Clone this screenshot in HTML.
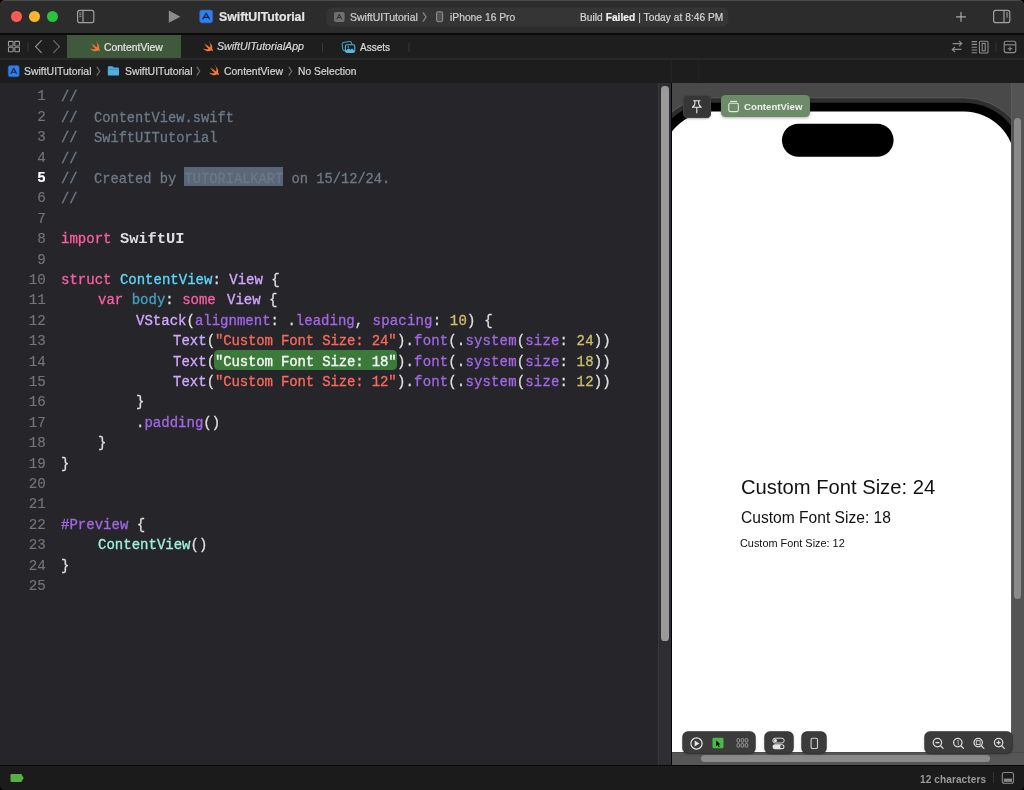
<!DOCTYPE html>
<html><head><meta charset="utf-8">
<style>
*{box-sizing:border-box;margin:0;padding:0}
html,body{width:1024px;height:790px;overflow:hidden;background:#000}
body{position:relative;font-family:"Liberation Sans",sans-serif}
.a{position:absolute}
.t{white-space:pre;will-change:transform}
svg{position:absolute;overflow:visible}
#win{position:absolute;left:0;top:0;width:1024px;height:790px;overflow:hidden;border-radius:5px;background:#1c1c1c}
</style></head><body>
<div id="win">

<div class="a" style="left:0;top:0;width:1024px;height:34px;background:#2c2c2c;border-radius:5px 5px 0 0;box-shadow:inset 0 1px 0 #4a4a4a"></div>
<div class="a" style="left:0;top:33.3px;width:1024px;height:1.6px;background:#0b0b0b"></div>
<div class="a" style="left:11.3px;top:11.0px;width:11.2px;height:11.2px;border-radius:50%;background:#fe5a52"></div>
<div class="a" style="left:28.9px;top:11.0px;width:11.2px;height:11.2px;border-radius:50%;background:#f9b52f"></div>
<div class="a" style="left:46.7px;top:11.0px;width:11.2px;height:11.2px;border-radius:50%;background:#2bc33e"></div>
<svg style="left:0;top:0" width="1024" height="34"><g fill="none" stroke="#a0a0a0" stroke-width="1.2"><rect x="77.6" y="10.4" width="16.2" height="12.2" rx="2.2"/><line x1="83" y1="10.4" x2="83" y2="23"/></g><g stroke="#8a8a8a" stroke-width="1"><line x1="79.3" y1="13" x2="81.5" y2="13"/><line x1="79.3" y1="14.8" x2="81.5" y2="14.8"/><line x1="79.3" y1="16.6" x2="81.5" y2="16.6"/></g><path d="M168.8 10.6 L180.4 16.7 L168.8 22.8 Z" fill="#8c8c8c"/><rect x="199.6" y="10" width="13.1" height="12.9" rx="2.4" fill="#2f7ef2" stroke="#2a5fb0" stroke-width="0.6"/><g stroke="#1b2740" stroke-width="1.25" fill="none" stroke-linecap="round"><path d="M206.2 13.2 L202.9 18.9 M206.2 13.2 L209.5 18.9 M204.4 17.4 H208"/></g><rect x="326.2" y="7.6" width="402.2" height="18.8" rx="6" fill="#353535"/><rect x="334" y="11.9" width="10.6" height="10.2" rx="2" fill="#707070"/><g stroke="#2e2e2e" stroke-width="1" fill="none" stroke-linecap="round"><path d="M339.3 14.4 L336.9 18.9 M339.3 14.4 L341.7 18.9 M338 17.6 H340.6"/></g><path d="M423.3 12.9 L426 17 L423.3 21.1" fill="none" stroke="#888" stroke-width="1.3" stroke-linecap="round"/><rect x="436.6" y="11.8" width="6" height="9.9" rx="1.6" fill="#505050" stroke="#8e8e8e" stroke-width="1.1"/><path d="M961 12 V21.8 M956.1 16.9 H965.9" stroke="#a8a8a8" stroke-width="1.2"/><g fill="none" stroke="#a0a0a0" stroke-width="1.2"><rect x="993.6" y="10.4" width="16.2" height="12.2" rx="2.2"/><line x1="1004" y1="10.4" x2="1004" y2="22.6"/></g><rect x="1006.1" y="12" width="2" height="5.6" fill="#6a6a6a"/></svg>
<div class="a t" style="left:219.40px;top:11.47px;font-size:12.30px;line-height:13.74px;color:#e4e4e4;font-weight:bold;font-style:normal;letter-spacing:0px;font-family:'Liberation Sans';-webkit-text-stroke:0.22px;">SwiftUITutorial</div>
<div class="a t" style="left:350.40px;top:11.80px;font-size:10.50px;line-height:11.73px;color:#cccccc;font-weight:normal;font-style:normal;letter-spacing:0px;font-family:'Liberation Sans';-webkit-text-stroke:0.22px;">SwiftUITutorial</div>
<div class="a t" style="left:450.20px;top:11.98px;font-size:10.30px;line-height:11.51px;color:#cccccc;font-weight:normal;font-style:normal;letter-spacing:0px;font-family:'Liberation Sans';-webkit-text-stroke:0.22px;">iPhone 16 Pro</div>
<div class="a t" style="left:579.50px;top:12.11px;font-size:10.15px;line-height:11.34px;color:#d4d4d4;font-weight:normal;font-style:normal;letter-spacing:0.06px;font-family:'Liberation Sans';-webkit-text-stroke:0.22px;">Build <b style="color:#f0f0f0">Failed</b> | Today at 8:46 PM</div>
<div class="a" style="left:0;top:35px;width:1024px;height:24px;background:#1e1e1e"></div>
<div class="a" style="left:67.4px;top:35px;width:113.7px;height:23.3px;background:#40583b"></div>
<div class="a" style="left:0;top:58.2px;width:1024px;height:1.8px;background:#282828"></div>
<svg style="left:88.7px;top:42.0px" width="10.8" height="9.6" viewBox="0.9 3.4 19.4 16.7" preserveAspectRatio="none"><path d="M13.543 3.41c4.114 2.47 6.545 7.162 5.549 11.131-.024.093-.05.181-.076.272l.002.001c2.062 2.538 1.5 5.258 1.236 4.745-1.072-2.086-3.066-1.568-4.088-1.043a6.803 6.803 0 0 1-.281.158l-.02.012-.002.002c-2.115 1.123-4.957 1.205-7.812-.022a12.568 12.568 0 0 1-5.64-4.838c.649.48 1.35.902 2.097 1.252 3.019 1.414 6.051 1.311 8.197-.002C9.651 12.73 7.347 9.965 5.626 7.654a26.14 26.14 0 0 1-1.105-1.748c2.06 1.883 5.32 4.258 6.48 4.912C8.54 8.225 6.3 4.965 7.35 6.216c3.667 3.9 6.84 6.162 8.026 6.88.13-.367.24-.745.334-1.138.871-3.546-.197-7.587-2.167-10.548z" fill="#f5782f"/></svg>
<div class="a t" style="left:104.00px;top:41.59px;font-size:10.40px;line-height:11.62px;color:#e2e2e2;font-weight:normal;font-style:normal;letter-spacing:0px;font-family:'Liberation Sans';-webkit-text-stroke:0.22px;">ContentView</div>
<svg style="left:201.9px;top:42.0px" width="10.8" height="9.6" viewBox="0.9 3.4 19.4 16.7" preserveAspectRatio="none"><path d="M13.543 3.41c4.114 2.47 6.545 7.162 5.549 11.131-.024.093-.05.181-.076.272l.002.001c2.062 2.538 1.5 5.258 1.236 4.745-1.072-2.086-3.066-1.568-4.088-1.043a6.803 6.803 0 0 1-.281.158l-.02.012-.002.002c-2.115 1.123-4.957 1.205-7.812-.022a12.568 12.568 0 0 1-5.64-4.838c.649.48 1.35.902 2.097 1.252 3.019 1.414 6.051 1.311 8.197-.002C9.651 12.73 7.347 9.965 5.626 7.654a26.14 26.14 0 0 1-1.105-1.748c2.06 1.883 5.32 4.258 6.48 4.912C8.54 8.225 6.3 4.965 7.35 6.216c3.667 3.9 6.84 6.162 8.026 6.88.13-.367.24-.745.334-1.138.871-3.546-.197-7.587-2.167-10.548z" fill="#f5782f"/></svg>
<div class="a t" style="left:217.00px;top:41.41px;font-size:10.60px;line-height:11.84px;color:#d6d6d6;font-weight:normal;font-style:italic;letter-spacing:0px;font-family:'Liberation Sans';-webkit-text-stroke:0.22px;">SwiftUITutorialApp</div>
<svg style="left:0;top:34px" width="1024" height="25"><g fill="none" stroke="#9a9a9a" stroke-width="1.1"><rect x="8.5" y="7.4" width="4.6" height="4.6" rx="0.6"/><rect x="14.8" y="7.4" width="4.6" height="4.6" rx="0.6"/><rect x="8.5" y="13.2" width="4.6" height="4.6" rx="0.6"/><rect x="14.8" y="13.2" width="4.6" height="4.6" rx="0.6"/></g><line x1="28" y1="8" x2="28" y2="18" stroke="#383838" stroke-width="1"/><path d="M41.6 6.3 L35.6 12.6 L41.6 18.9" fill="none" stroke="#909090" stroke-width="1.2"/><path d="M53.4 6.3 L59.4 12.6 L53.4 18.9" fill="none" stroke="#6a6a6a" stroke-width="1.2"/><line x1="322.5" y1="9" x2="322.5" y2="18" stroke="#383838" stroke-width="1"/><line x1="409" y1="9" x2="409" y2="18" stroke="#383838" stroke-width="1"/><g transform="rotate(-9 347 12)"><rect x="342.4" y="8" width="9.6" height="8.4" rx="1.8" fill="none" stroke="#4a9ac4" stroke-width="1.1"/></g><rect x="345.4" y="10.8" width="9.4" height="7.6" rx="1.6" fill="#1e1e1e" stroke="#5ab4e0" stroke-width="1.1"/><path d="M345.9 18 L345.9 16.4 L348.6 14.2 L350.6 15.8 L352 14.6 L354.3 16.6 L354.3 18 Z" fill="#5ab4e0"/><circle cx="348.3" cy="13.1" r="0.8" fill="#5ab4e0"/><g fill="none" stroke="#8e8e8e" stroke-width="1.1"><path d="M952.6 9.6 H961.8 M959 7 L961.8 9.6 L959 12.2"/><path d="M961.4 15.4 H952.2 M955 12.8 L952.2 15.4 L955 18"/><path d="M971.6 7.6 H977 M971.6 10.4 H977 M971.6 13.2 H977 M971.6 16 H977 M971.6 18.8 H977"/><rect x="979.4" y="7.2" width="8.6" height="11.8" rx="1"/><rect x="982.2" y="9.4" width="3" height="7.4"/><rect x="1004.2" y="7.2" width="11.6" height="11.4" rx="2"/><line x1="1004.2" y1="10.8" x2="1015.8" y2="10.8"/><path d="M1010 12.4 V17 M1007.7 14.7 H1012.3"/></g><line x1="996" y1="8" x2="996" y2="18" stroke="#333" stroke-width="1"/></svg>
<div class="a t" style="left:359.60px;top:41.95px;font-size:10.00px;line-height:11.17px;color:#dadada;font-weight:normal;font-style:normal;letter-spacing:0px;font-family:'Liberation Sans';-webkit-text-stroke:0.22px;">Assets</div>
<div class="a" style="left:0;top:60px;width:1024px;height:23px;background:#1d1d1d"></div>
<svg style="left:0;top:59px" width="1024" height="24"><rect x="8.2" y="6.6" width="11" height="11.2" rx="2" fill="#2f7ef2" stroke="#2a5fb0" stroke-width="0.5"/><g stroke="#1b2740" stroke-width="1.1" fill="none" stroke-linecap="round"><path d="M13.7 9.2 L11 14.4 M13.7 9.2 L16.4 14.4 M12.2 13.2 H15.2"/></g><g fill="none" stroke="#6a6a6a" stroke-width="1.25" stroke-linecap="round"><path d="M97 8.2 L99.7 12.2 L97 16.2"/><path d="M197 8.2 L199.7 12.2 L197 16.2"/><path d="M289 8.2 L291.7 12.2 L289 16.2"/></g><path d="M107.8 8.4 Q107.8 7.2 109 7.2 H112.4 L113.6 8.6 H117.8 Q119 8.6 119 9.8 V15.4 Q119 16.6 117.8 16.6 H109 Q107.8 16.6 107.8 15.4 Z" fill="#52ade3"/><rect x="107.8" y="9.8" width="11.2" height="1" fill="#3a8fc4"/></svg>
<svg style="left:208.4px;top:66.0px" width="10.8" height="9.6" viewBox="0.9 3.4 19.4 16.7" preserveAspectRatio="none"><path d="M13.543 3.41c4.114 2.47 6.545 7.162 5.549 11.131-.024.093-.05.181-.076.272l.002.001c2.062 2.538 1.5 5.258 1.236 4.745-1.072-2.086-3.066-1.568-4.088-1.043a6.803 6.803 0 0 1-.281.158l-.02.012-.002.002c-2.115 1.123-4.957 1.205-7.812-.022a12.568 12.568 0 0 1-5.64-4.838c.649.48 1.35.902 2.097 1.252 3.019 1.414 6.051 1.311 8.197-.002C9.651 12.73 7.347 9.965 5.626 7.654a26.14 26.14 0 0 1-1.105-1.748c2.06 1.883 5.32 4.258 6.48 4.912C8.54 8.225 6.3 4.965 7.35 6.216c3.667 3.9 6.84 6.162 8.026 6.88.13-.367.24-.745.334-1.138.871-3.546-.197-7.587-2.167-10.548z" fill="#f5782f"/></svg>
<div class="a" style="left:671px;top:60px;width:0.8px;height:23px;background:#242424"></div>
<div class="a" style="left:698.4px;top:60px;width:0.8px;height:23px;background:#222"></div>
<div class="a t" style="left:24.00px;top:65.84px;font-size:10.45px;line-height:11.67px;color:#d2d2d2;font-weight:normal;font-style:normal;letter-spacing:0px;font-family:'Liberation Sans';-webkit-text-stroke:0.22px;">SwiftUITutorial</div>
<div class="a t" style="left:124.50px;top:65.84px;font-size:10.45px;line-height:11.67px;color:#d2d2d2;font-weight:normal;font-style:normal;letter-spacing:0px;font-family:'Liberation Sans';-webkit-text-stroke:0.22px;">SwiftUITutorial</div>
<div class="a t" style="left:224.10px;top:65.84px;font-size:10.45px;line-height:11.67px;color:#d2d2d2;font-weight:normal;font-style:normal;letter-spacing:0px;font-family:'Liberation Sans';-webkit-text-stroke:0.22px;">ContentView</div>
<div class="a t" style="left:298.30px;top:65.98px;font-size:10.30px;line-height:11.51px;color:#d2d2d2;font-weight:normal;font-style:normal;letter-spacing:0px;font-family:'Liberation Sans';-webkit-text-stroke:0.22px;">No Selection</div>
<div class="a" style="left:0;top:83px;width:658px;height:682px;background:#26262a"></div>
<div class="a" style="left:657.8px;top:83px;width:1.3px;height:682px;background:#38383c"></div>
<div class="a" style="left:659px;top:83px;width:12px;height:682px;background:#2e2e32"></div>
<div class="a" style="left:661.4px;top:86.3px;width:7.2px;height:554.7px;border-radius:3.6px;background:#9a9a9a"></div>
<div class="a" style="left:670.6px;top:83px;width:1.6px;height:682px;background:#050505"></div>
<div class="a t" style="left:0;width:45.8px;text-align:right;top:86.30px;height:20px;line-height:20px;font-family:'Liberation Mono';font-size:14.2px;-webkit-text-stroke:0.15px;color:#747478;font-weight:normal">1</div>
<div class="a t" style="left:0;width:45.8px;text-align:right;top:106.71px;height:20px;line-height:20px;font-family:'Liberation Mono';font-size:14.2px;-webkit-text-stroke:0.15px;color:#747478;font-weight:normal">2</div>
<div class="a t" style="left:0;width:45.8px;text-align:right;top:127.11px;height:20px;line-height:20px;font-family:'Liberation Mono';font-size:14.2px;-webkit-text-stroke:0.15px;color:#747478;font-weight:normal">3</div>
<div class="a t" style="left:0;width:45.8px;text-align:right;top:147.52px;height:20px;line-height:20px;font-family:'Liberation Mono';font-size:14.2px;-webkit-text-stroke:0.15px;color:#747478;font-weight:normal">4</div>
<div class="a t" style="left:0;width:45.8px;text-align:right;top:167.92px;height:20px;line-height:20px;font-family:'Liberation Mono';font-size:14.2px;-webkit-text-stroke:0.15px;color:#ffffff;font-weight:bold">5</div>
<div class="a t" style="left:0;width:45.8px;text-align:right;top:188.33px;height:20px;line-height:20px;font-family:'Liberation Mono';font-size:14.2px;-webkit-text-stroke:0.15px;color:#747478;font-weight:normal">6</div>
<div class="a t" style="left:0;width:45.8px;text-align:right;top:208.74px;height:20px;line-height:20px;font-family:'Liberation Mono';font-size:14.2px;-webkit-text-stroke:0.15px;color:#747478;font-weight:normal">7</div>
<div class="a t" style="left:0;width:45.8px;text-align:right;top:229.14px;height:20px;line-height:20px;font-family:'Liberation Mono';font-size:14.2px;-webkit-text-stroke:0.15px;color:#747478;font-weight:normal">8</div>
<div class="a t" style="left:0;width:45.8px;text-align:right;top:249.55px;height:20px;line-height:20px;font-family:'Liberation Mono';font-size:14.2px;-webkit-text-stroke:0.15px;color:#747478;font-weight:normal">9</div>
<div class="a t" style="left:0;width:45.8px;text-align:right;top:269.95px;height:20px;line-height:20px;font-family:'Liberation Mono';font-size:14.2px;-webkit-text-stroke:0.15px;color:#747478;font-weight:normal">10</div>
<div class="a t" style="left:0;width:45.8px;text-align:right;top:290.36px;height:20px;line-height:20px;font-family:'Liberation Mono';font-size:14.2px;-webkit-text-stroke:0.15px;color:#747478;font-weight:normal">11</div>
<div class="a t" style="left:0;width:45.8px;text-align:right;top:310.77px;height:20px;line-height:20px;font-family:'Liberation Mono';font-size:14.2px;-webkit-text-stroke:0.15px;color:#747478;font-weight:normal">12</div>
<div class="a t" style="left:0;width:45.8px;text-align:right;top:331.17px;height:20px;line-height:20px;font-family:'Liberation Mono';font-size:14.2px;-webkit-text-stroke:0.15px;color:#747478;font-weight:normal">13</div>
<div class="a t" style="left:0;width:45.8px;text-align:right;top:351.58px;height:20px;line-height:20px;font-family:'Liberation Mono';font-size:14.2px;-webkit-text-stroke:0.15px;color:#747478;font-weight:normal">14</div>
<div class="a t" style="left:0;width:45.8px;text-align:right;top:371.98px;height:20px;line-height:20px;font-family:'Liberation Mono';font-size:14.2px;-webkit-text-stroke:0.15px;color:#747478;font-weight:normal">15</div>
<div class="a t" style="left:0;width:45.8px;text-align:right;top:392.39px;height:20px;line-height:20px;font-family:'Liberation Mono';font-size:14.2px;-webkit-text-stroke:0.15px;color:#747478;font-weight:normal">16</div>
<div class="a t" style="left:0;width:45.8px;text-align:right;top:412.80px;height:20px;line-height:20px;font-family:'Liberation Mono';font-size:14.2px;-webkit-text-stroke:0.15px;color:#747478;font-weight:normal">17</div>
<div class="a t" style="left:0;width:45.8px;text-align:right;top:433.20px;height:20px;line-height:20px;font-family:'Liberation Mono';font-size:14.2px;-webkit-text-stroke:0.15px;color:#747478;font-weight:normal">18</div>
<div class="a t" style="left:0;width:45.8px;text-align:right;top:453.61px;height:20px;line-height:20px;font-family:'Liberation Mono';font-size:14.2px;-webkit-text-stroke:0.15px;color:#747478;font-weight:normal">19</div>
<div class="a t" style="left:0;width:45.8px;text-align:right;top:474.01px;height:20px;line-height:20px;font-family:'Liberation Mono';font-size:14.2px;-webkit-text-stroke:0.15px;color:#747478;font-weight:normal">20</div>
<div class="a t" style="left:0;width:45.8px;text-align:right;top:494.42px;height:20px;line-height:20px;font-family:'Liberation Mono';font-size:14.2px;-webkit-text-stroke:0.15px;color:#747478;font-weight:normal">21</div>
<div class="a t" style="left:0;width:45.8px;text-align:right;top:514.83px;height:20px;line-height:20px;font-family:'Liberation Mono';font-size:14.2px;-webkit-text-stroke:0.15px;color:#747478;font-weight:normal">22</div>
<div class="a t" style="left:0;width:45.8px;text-align:right;top:535.23px;height:20px;line-height:20px;font-family:'Liberation Mono';font-size:14.2px;-webkit-text-stroke:0.15px;color:#747478;font-weight:normal">23</div>
<div class="a t" style="left:0;width:45.8px;text-align:right;top:555.64px;height:20px;line-height:20px;font-family:'Liberation Mono';font-size:14.2px;-webkit-text-stroke:0.15px;color:#747478;font-weight:normal">24</div>
<div class="a t" style="left:0;width:45.8px;text-align:right;top:576.04px;height:20px;line-height:20px;font-family:'Liberation Mono';font-size:14.2px;-webkit-text-stroke:0.15px;color:#747478;font-weight:normal">25</div>
<div class="a" style="left:184.4px;top:166.7px;width:98.6px;height:19.8px;background:#5b6679"></div>
<div class="a" style="left:214.2px;top:350.2px;width:182.8px;height:20.1px;border-radius:4.5px;background:#3b7a3a"></div>
<div class="a t" style="left:61.00px;top:88.37px;height:20px;line-height:20px;font-family:'Liberation Mono';font-size:13.72px;letter-spacing:0px;-webkit-text-stroke:0.3px"><span style="color:#6c7986">//</span></div>
<div class="a t" style="left:61.00px;top:108.78px;height:20px;line-height:20px;font-family:'Liberation Mono';font-size:13.72px;letter-spacing:0px;-webkit-text-stroke:0.3px"><span style="color:#6c7986">//  ContentView.swift</span></div>
<div class="a t" style="left:61.00px;top:129.18px;height:20px;line-height:20px;font-family:'Liberation Mono';font-size:13.72px;letter-spacing:0px;-webkit-text-stroke:0.3px"><span style="color:#6c7986">//  SwiftUITutorial</span></div>
<div class="a t" style="left:61.00px;top:149.59px;height:20px;line-height:20px;font-family:'Liberation Mono';font-size:13.72px;letter-spacing:0px;-webkit-text-stroke:0.3px"><span style="color:#6c7986">//</span></div>
<div class="a t" style="left:61.00px;top:169.99px;height:20px;line-height:20px;font-family:'Liberation Mono';font-size:13.72px;letter-spacing:0px;-webkit-text-stroke:0.3px"><span style="color:#6c7986">//  Created by </span><span style="color:#6c7986">TUTORIALKART</span><span style="color:#6c7986"> on 15/12/24.</span></div>
<div class="a t" style="left:61.00px;top:190.40px;height:20px;line-height:20px;font-family:'Liberation Mono';font-size:13.72px;letter-spacing:0px;-webkit-text-stroke:0.3px"><span style="color:#6c7986">//</span></div>
<div class="a t" style="left:61.00px;top:229.13px;height:20px;line-height:20px;font-family:'Liberation Mono';font-size:14.03px;letter-spacing:0px;-webkit-text-stroke:0.3px"><span style="color:#fc5fa3">import</span><span style="color:#dfdfe0"> </span><span style="color:#dfdfe0;font-size:15.4px;font-weight:bold;-webkit-text-stroke:0">SwiftUI</span></div>
<div class="a t" style="left:61.00px;top:269.94px;height:20px;line-height:20px;font-family:'Liberation Mono';font-size:14.03px;letter-spacing:0px;-webkit-text-stroke:0.3px"><span style="color:#fc5fa3">struct</span><span style="color:#dfdfe0"> </span><span style="color:#5dd8ff">ContentView</span><span style="color:#dfdfe0">: </span><span style="color:#d0a8ff">View</span><span style="color:#dfdfe0"> {</span></div>
<div class="a t" style="left:98.40px;top:290.35px;height:20px;line-height:20px;font-family:'Liberation Mono';font-size:14.03px;letter-spacing:0px;-webkit-text-stroke:0.3px"><span style="color:#fc5fa3">var</span><span style="color:#dfdfe0"> </span><span style="color:#41a1c0">body</span><span style="color:#dfdfe0">: </span><span style="color:#fc5fa3">some</span><span style="color:#dfdfe0"> </span></div>
<div class="a t" style="left:226.70px;top:290.35px;height:20px;line-height:20px;font-family:'Liberation Mono';font-size:14.03px;letter-spacing:0px;-webkit-text-stroke:0.3px"><span style="color:#d0a8ff">View</span><span style="color:#dfdfe0"> {</span></div>
<div class="a t" style="left:135.80px;top:310.76px;height:20px;line-height:20px;font-family:'Liberation Mono';font-size:14.03px;letter-spacing:0px;-webkit-text-stroke:0.3px"><span style="color:#d0a8ff">VStack</span><span style="color:#dfdfe0">(</span><span style="color:#a167e6">alignment</span><span style="color:#dfdfe0">: </span><span style="color:#dfdfe0">.</span><span style="color:#a167e6">leading</span><span style="color:#dfdfe0">,</span></div>
<div class="a t" style="left:364.20px;top:310.76px;height:20px;line-height:20px;font-family:'Liberation Mono';font-size:14.03px;letter-spacing:0.17px;-webkit-text-stroke:0.3px"><span style="color:#dfdfe0"> </span><span style="color:#a167e6">spacing</span><span style="color:#dfdfe0">: </span><span style="color:#d0bf69">10</span><span style="color:#dfdfe0">) {</span></div>
<div class="a t" style="left:173.20px;top:331.16px;height:20px;line-height:20px;font-family:'Liberation Mono';font-size:14.03px;letter-spacing:0px;-webkit-text-stroke:0.3px"><span style="color:#d0a8ff">Text</span><span style="color:#dfdfe0">(</span><span style="color:#fc6a5d;letter-spacing:-0.17px">"Custom Font Size: 24"</span></div>
<div class="a t" style="left:397.25px;top:331.16px;height:20px;line-height:20px;font-family:'Liberation Mono';font-size:14.03px;letter-spacing:0.14px;-webkit-text-stroke:0.3px"><span style="color:#dfdfe0">).</span><span style="color:#a167e6">font</span><span style="color:#dfdfe0">(.</span><span style="color:#a167e6">system</span><span style="color:#dfdfe0">(</span><span style="color:#a167e6">size</span><span style="color:#dfdfe0">: </span><span style="color:#d0bf69">24</span><span style="color:#dfdfe0">))</span></div>
<div class="a t" style="left:173.20px;top:351.57px;height:20px;line-height:20px;font-family:'Liberation Mono';font-size:14.03px;letter-spacing:0px;-webkit-text-stroke:0.3px"><span style="color:#d0a8ff">Text</span><span style="color:#dfdfe0">(</span><span style="color:#ffffff;letter-spacing:-0.17px">"Custom Font Size: 18"</span></div>
<div class="a t" style="left:397.25px;top:351.57px;height:20px;line-height:20px;font-family:'Liberation Mono';font-size:14.03px;letter-spacing:0.14px;-webkit-text-stroke:0.3px"><span style="color:#dfdfe0">).</span><span style="color:#a167e6">font</span><span style="color:#dfdfe0">(.</span><span style="color:#a167e6">system</span><span style="color:#dfdfe0">(</span><span style="color:#a167e6">size</span><span style="color:#dfdfe0">: </span><span style="color:#d0bf69">18</span><span style="color:#dfdfe0">))</span></div>
<div class="a t" style="left:173.20px;top:371.97px;height:20px;line-height:20px;font-family:'Liberation Mono';font-size:14.03px;letter-spacing:0px;-webkit-text-stroke:0.3px"><span style="color:#d0a8ff">Text</span><span style="color:#dfdfe0">(</span><span style="color:#fc6a5d;letter-spacing:-0.17px">"Custom Font Size: 12"</span></div>
<div class="a t" style="left:397.25px;top:371.97px;height:20px;line-height:20px;font-family:'Liberation Mono';font-size:14.03px;letter-spacing:0.14px;-webkit-text-stroke:0.3px"><span style="color:#dfdfe0">).</span><span style="color:#a167e6">font</span><span style="color:#dfdfe0">(.</span><span style="color:#a167e6">system</span><span style="color:#dfdfe0">(</span><span style="color:#a167e6">size</span><span style="color:#dfdfe0">: </span><span style="color:#d0bf69">12</span><span style="color:#dfdfe0">))</span></div>
<div class="a t" style="left:135.80px;top:392.38px;height:20px;line-height:20px;font-family:'Liberation Mono';font-size:14.03px;letter-spacing:0px;-webkit-text-stroke:0.3px"><span style="color:#dfdfe0">}</span></div>
<div class="a t" style="left:135.80px;top:412.79px;height:20px;line-height:20px;font-family:'Liberation Mono';font-size:14.03px;letter-spacing:0px;-webkit-text-stroke:0.3px"><span style="color:#dfdfe0">.</span><span style="color:#a167e6">padding</span><span style="color:#dfdfe0">()</span></div>
<div class="a t" style="left:98.40px;top:433.19px;height:20px;line-height:20px;font-family:'Liberation Mono';font-size:14.03px;letter-spacing:0px;-webkit-text-stroke:0.3px"><span style="color:#dfdfe0">}</span></div>
<div class="a t" style="left:61.00px;top:453.60px;height:20px;line-height:20px;font-family:'Liberation Mono';font-size:14.03px;letter-spacing:0px;-webkit-text-stroke:0.3px"><span style="color:#dfdfe0">}</span></div>
<div class="a t" style="left:61.00px;top:514.82px;height:20px;line-height:20px;font-family:'Liberation Mono';font-size:14.03px;letter-spacing:0px;-webkit-text-stroke:0.3px"><span style="color:#a167e6">#Preview</span><span style="color:#dfdfe0"> {</span></div>
<div class="a t" style="left:98.40px;top:535.22px;height:20px;line-height:20px;font-family:'Liberation Mono';font-size:14.03px;letter-spacing:0px;-webkit-text-stroke:0.3px"><span style="color:#9ef1dd">ContentView</span><span style="color:#dfdfe0">()</span></div>
<div class="a t" style="left:61.00px;top:555.63px;height:20px;line-height:20px;font-family:'Liberation Mono';font-size:14.03px;letter-spacing:0px;-webkit-text-stroke:0.3px"><span style="color:#dfdfe0">}</span></div>
<div class="a" style="left:672.2px;top:83px;width:351.8px;height:682px;background:#494949;overflow:hidden"><svg style="left:0;top:0" width="352" height="682" viewBox="672.2 83 351.8 682"><path d="M647.6 800 V162.6 A64.8 64.8 0 0 1 712.4 97.8 H964 A64.8 64.8 0 0 1 1028.8 162.6 V800 Z" fill="#2e2e2e" stroke="#5e5e5e" stroke-width="0.9"/><path d="M652.5 800 V162.6 A59.9 59.9 0 0 1 712.4 102.7 H964 A59.9 59.9 0 0 1 1023.9 162.6 V800 Z" fill="#000"/><path d="M661.5 800 V162.6 A51 51 0 0 1 712.5 111.6 H964 A51 51 0 0 1 1015 162.6 V800 Z" fill="#fff"/><rect x="782" y="123.7" width="111.7" height="33.1" rx="16.55" fill="#000"/></svg></div>
<div class="a" style="left:683.2px;top:95.3px;width:28.2px;height:22.3px;border-radius:4.5px;background:#363636;box-shadow:inset 0 0 0 0.7px #474747,0 1px 2px rgba(0,0,0,.3)"></div>
<svg style="left:0;top:0" width="1024" height="130"><g fill="none" stroke="#e8e8e8" stroke-width="1.1" stroke-linejoin="round"><path d="M693.2 100.7 H700.4 M694.9 100.7 V103.6 Q694.9 105.4 692.4 107.3 H701.2 Q698.7 105.4 698.7 103.6 V100.7 M696.8 107.6 V113.2"/></g></svg>
<div class="a" style="left:721px;top:95.1px;width:89.2px;height:22.4px;border-radius:4.5px;background:#6d8b69;box-shadow:0 1px 3px rgba(0,0,0,.3)"></div>
<svg style="left:0;top:0" width="1024" height="130"><g fill="none" stroke="#dfe8de" stroke-width="1.1"><rect x="728.8" y="103.2" width="9.6" height="8.4" rx="1.6"/><path d="M730 101.4 H737.2"/></g></svg>
<div class="a t" style="left:744.10px;top:101.61px;font-size:9.60px;line-height:10.72px;color:#eef3ed;font-weight:bold;font-style:normal;letter-spacing:0.05px;font-family:'Liberation Sans';-webkit-text-stroke:0px;">ContentView</div>
<div class="a t" style="left:740.50px;top:475.82px;font-size:20.20px;line-height:22.56px;color:#111111;font-weight:normal;font-style:normal;letter-spacing:0px;font-family:'Liberation Sans';-webkit-text-stroke:0px;">Custom Font Size: 24</div>
<div class="a t" style="left:740.50px;top:509.48px;font-size:15.60px;line-height:17.43px;color:#111111;font-weight:normal;font-style:normal;letter-spacing:0px;font-family:'Liberation Sans';-webkit-text-stroke:0px;">Custom Font Size: 18</div>
<div class="a t" style="left:740.40px;top:537.04px;font-size:10.90px;line-height:12.18px;color:#111111;font-weight:normal;font-style:normal;letter-spacing:0px;font-family:'Liberation Sans';-webkit-text-stroke:0px;">Custom Font Size: 12</div>
<div class="a" style="left:1011px;top:83px;width:13px;height:682px;background:#545454;box-shadow:inset 1px 0 0 #5c5c5c"></div>
<div class="a" style="left:1014.2px;top:118px;width:7px;height:480.5px;border-radius:3.5px;background:#8a8a8a"></div>
<div class="a" style="left:672.2px;top:752px;width:351.8px;height:12.8px;background:#565656;box-shadow:inset 0 1px 0 #4a4a4a"></div>
<div class="a" style="left:700.5px;top:755.3px;width:289px;height:7.2px;border-radius:3.6px;background:#8a8a8a"></div>
<div class="a" style="left:682.9px;top:731.9px;width:72.5px;height:21.6px;border-radius:5px;background:#3b3b3b;box-shadow:0 0 0 0.7px #2e2e2e,0 1px 3px rgba(0,0,0,.35)"></div>
<div class="a" style="left:764.7px;top:731.9px;width:28.8px;height:21.6px;border-radius:5px;background:#3b3b3b;box-shadow:0 0 0 0.7px #2e2e2e,0 1px 3px rgba(0,0,0,.35)"></div>
<div class="a" style="left:802.3px;top:731.9px;width:23.9px;height:21.6px;border-radius:5px;background:#3b3b3b;box-shadow:0 0 0 0.7px #2e2e2e,0 1px 3px rgba(0,0,0,.35)"></div>
<div class="a" style="left:925.3px;top:731.9px;width:87.0px;height:21.6px;border-radius:5px;background:#3b3b3b;box-shadow:0 0 0 0.7px #2e2e2e,0 1px 3px rgba(0,0,0,.35)"></div>
<svg style="left:0;top:700px" width="1024" height="90" viewBox="0 700 1024 90"><circle cx="696.5" cy="743.5" r="5.6" fill="none" stroke="#e6e6e6" stroke-width="1.2"/><path d="M694.6 740.6 L699.4 743.5 L694.6 746.4 Z" fill="#e6e6e6"/><rect x="712.5" y="737.7" width="11" height="10.6" rx="1.4" fill="#4cb84a"/><path d="M716.2 740.2 L716.2 746.4 L717.6 745 L718.8 747.2 L719.7 746.7 L718.6 744.6 L720.5 744.4 Z" fill="#111"/><g fill="none" stroke="#a8a8a8" stroke-width="0.85"><rect x="737.0" y="738.6" width="2.6" height="3.6" rx="0.9"/><rect x="737.0" y="743.6" width="2.6" height="3.6" rx="0.9"/><rect x="741.1" y="738.6" width="2.6" height="3.6" rx="0.9"/><rect x="741.1" y="743.6" width="2.6" height="3.6" rx="0.9"/><rect x="745.2" y="738.6" width="2.6" height="3.6" rx="0.9"/><rect x="745.2" y="743.6" width="2.6" height="3.6" rx="0.9"/></g><g><rect x="772.8" y="738.2" width="11.4" height="4.8" rx="2.4" fill="none" stroke="#e0e0e0" stroke-width="1"/><circle cx="775.4" cy="740.6" r="1.6" fill="#e0e0e0"/><rect x="772.6" y="744.2" width="11.8" height="5" rx="2.5" fill="#e6e6e6"/><circle cx="781.8" cy="746.7" r="1.6" fill="#3b3b3b"/></g><rect x="811.1" y="738.3" width="6.4" height="10.2" rx="1.3" fill="none" stroke="#cfcfcf" stroke-width="1.1"/><g fill="none" stroke="#d8d8d8" stroke-width="1.3"><circle cx="937.4" cy="742.6" r="4.2"/><path d="M940.5 745.7 L943.1 748.4" stroke-linecap="round"/></g><g fill="none" stroke="#d8d8d8" stroke-width="1.3"><circle cx="957.8" cy="742.6" r="4.2"/><path d="M960.9 745.7 L963.5 748.4" stroke-linecap="round"/></g><g fill="none" stroke="#d8d8d8" stroke-width="1.3"><circle cx="978.2" cy="742.6" r="4.2"/><path d="M981.3 745.7 L983.9 748.4" stroke-linecap="round"/></g><g fill="none" stroke="#d8d8d8" stroke-width="1.3"><circle cx="998.6" cy="742.6" r="4.2"/><path d="M1001.7 745.7 L1004.3 748.4" stroke-linecap="round"/></g><path d="M935.4 742.6 H939.4" stroke="#d8d8d8" stroke-width="1.4"/><path d="M957.2 740.6 L958.2 740.2 V745" stroke="#b8b8b8" stroke-width="0.9" fill="none"/><rect x="976.3" y="740.7" width="3.8" height="3.8" fill="none" stroke="#d8d8d8" stroke-width="0.9"/><path d="M996.6 742.6 H1000.6 M998.6 740.6 V744.6" stroke="#d8d8d8" stroke-width="1.3"/></svg>
<div class="a" style="left:0;top:764.8px;width:1024px;height:25.2px;background:#1b1b1b;box-shadow:inset 0 1px 0 #080808"></div>
<svg style="left:0;top:760px" width="1024" height="30" viewBox="0 760 1024 30"><path d="M10.5 775.2 Q10.5 774 11.7 774 H21.3 L23.7 778 L21.3 782 H11.7 Q10.5 782 10.5 780.8 Z" fill="#58b044"/><line x1="993.5" y1="772" x2="993.5" y2="783" stroke="#333" stroke-width="1"/><rect x="1002.3" y="772.5" width="11.2" height="10.8" rx="2" fill="none" stroke="#8a8a8a" stroke-width="1.1"/><rect x="1003.8" y="778.6" width="8.2" height="3.2" fill="#8a8a8a"/></svg>
<div class="a t" style="left:920.30px;top:773.66px;font-size:10.10px;line-height:11.28px;color:#9a9a9a;font-weight:bold;font-style:normal;letter-spacing:0.08px;font-family:'Liberation Sans';-webkit-text-stroke:0px;">12 characters</div>
</div></body></html>
